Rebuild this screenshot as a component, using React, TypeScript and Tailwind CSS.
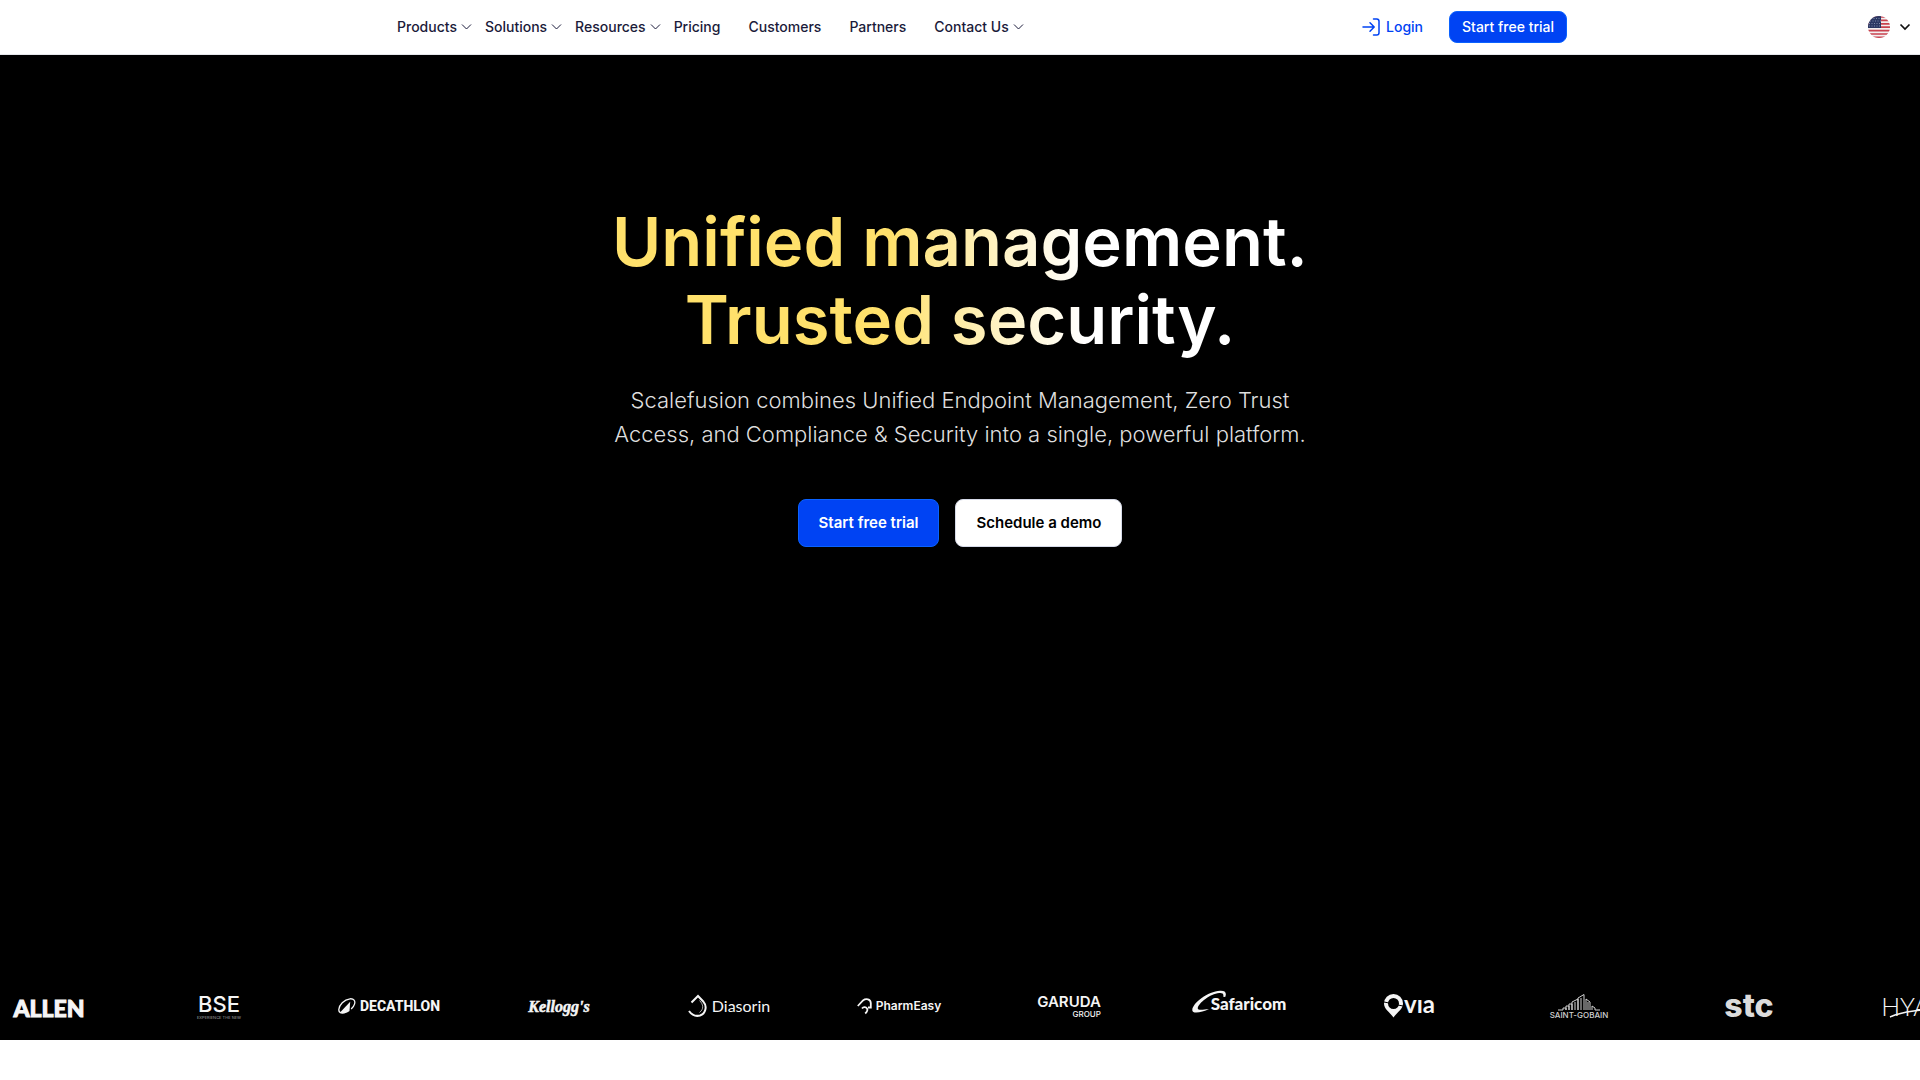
import type { ReactNode } from "react";

interface NavItem {
  label: string;
  hasMenu?: boolean;
}

interface Brand {
  name: string;
  logo: ReactNode;
}

const navItems: NavItem[] = [
  { label: "Products", hasMenu: true },
  { label: "Solutions", hasMenu: true },
  { label: "Resources", hasMenu: true },
  { label: "Pricing" },
  { label: "Customers" },
  { label: "Partners" },
  { label: "Contact Us", hasMenu: true },
];

const brands: Brand[] = [
  {
    name: "Allen",
    logo: (
      <svg width="84" height="28" viewBox="0 0 84 28" className="mt-2">
        <text x="42" y="21" textAnchor="middle" fill="currentColor" stroke="currentColor" strokeWidth="1" className="font-[Lato] text-[23px] font-black">
          ALLEN
        </text>
      </svg>
    ),
  },
  {
    name: "BSE",
    logo: (
      <span className="flex flex-col items-center pt-1">
        <span className="text-[22px] leading-5 font-medium">BSE</span>
        <span className="text-[4px] leading-2 text-white/60">EXPERIENCE THE NEW</span>
      </span>
    ),
  },
  {
    name: "Decathlon",
    logo: (
      <span className="flex items-center gap-1">
        <svg width="18" height="16" viewBox="0 0 18 16" fill="none">
          <path d="M7 14.5C3 16 .6 14.5.8 11.500 1.100 7 6 1.500 12 .8c4-.3 5.400 2 4.600 5-.5 2-1.800 3.700-3.400 5.200" stroke="currentColor" strokeWidth="1.300" />
          <path d="M2 14.500 12.200 3.800 11.500 13c-3 2.400-7 3-9.500 1.500Z" fill="currentColor" />
        </svg>
        <span className="font-[Roboto] text-[14px] leading-5 font-extrabold">DECATHLON</span>
      </span>
    ),
  },
  {
    name: "Kellogg's",
    logo: (
      <svg width="72" height="32" viewBox="0 0 72 32">
        <text x="36" y="22" textAnchor="middle" fill="currentColor" stroke="currentColor" strokeWidth=".5" className="font-['Liberation_Serif'] text-[16px] font-bold italic">
          Kellogg's
        </text>
      </svg>
    ),
  },
  {
    name: "Diasorin",
    logo: (
      <span className="flex items-center gap-1">
        <svg width="20" height="24" viewBox="0 0 20 24" fill="none" stroke="currentColor">
          <path d="M3.500 8.500 10 2l5.500 5.800c4 4.500 2 12-3.500 13.700C7.500 22.700 3.500 20.500 1 17" strokeWidth="2" />
          <path d="M11.500 6.500c4 4 4.500 8.500 0 12" strokeWidth="1" opacity=".7" />
        </svg>
        <span className="font-[Lato] text-[16px] leading-5">Diasorin</span>
      </span>
    ),
  },
  {
    name: "PharmEasy",
    logo: (
      <span className="flex items-center gap-1">
        <svg width="15" height="17" viewBox="0 0 15 17" fill="none" stroke="currentColor" strokeWidth="1.800">
          <path d="M.8 8 6 2.500C9 .2 13.500 1 13.800 5v4.500H11" />
          <path d="M5 10.500c1.500-2 4-1.500 5 0s.3 3-1.800 5" />
        </svg>
        <span className="text-[12px] leading-5 font-semibold">PharmEasy</span>
      </span>
    ),
  },
  {
    name: "Garuda Group",
    logo: (
      <span className="flex flex-col items-end">
        <span className="text-[15px] leading-4 font-semibold">GARUDA</span>
        <span className="text-[8px] leading-2 font-medium">GROUP</span>
      </span>
    ),
  },
  {
    name: "Safaricom",
    logo: (
      <span className="flex items-center -mt-2">
        <svg className="-mr-4" width="35" height="24" viewBox="0 0 35 24" fill="currentColor">
          <path d="M17 19C10 22.500 0 24.500.3 20 .6 13 16 1.500 28 .8c5-.3 7 1.700 5.200 6.200l-2-.2c.8-3-.8-4-4-3.700C18 4 7 13 5.800 17.800 5.200 20.500 10 20 17 19Z" />
        </svg>
        <span className="pt-1 font-[Lato] text-[17px] leading-6 font-black">Safaricom</span>
      </span>
    ),
  },
  {
    name: "Via",
    logo: (
      <span className="flex items-center">
        <svg width="21" height="24" viewBox="0 0 21 24" fill="none">
          <path d="M10.500 0a9.500 9.500 0 0 0-9.500 9.500C1 15 6.500 18 10.500 23.500 14.500 18 20 15 20 9.500A9.500 9.500 0 0 0 10.500 0Zm0 4a5.500 5.500 0 1 1 0 11 5.500 5.500 0 0 1 0-11Z" fill="currentColor" />
          <path d="m1 8 5 1M15 11l5 1" stroke="black" strokeWidth="1" />
        </svg>
        <span className="pb-1 font-[Lato] text-[24px] leading-6 font-bold">vıa</span>
      </span>
    ),
  },
  {
    name: "Saint-Gobain",
    logo: (
      <span className="flex flex-col items-center text-[#d0d0d0]">
        <svg width="44" height="17" viewBox="0 0 44 17" fill="none" stroke="currentColor">
          <path d="M1 16h5v-2h3v2-4h3v4-6h3v6-8l6-3v11M21 16V4l6-3.500V16M29 16V5l4 3v8M35 16v-4l3 2v2h5M18 16V8M24 16V4M31 16V8" />
        </svg>
        <span className="text-[8px] leading-2 font-medium">SAINT-GOBAIN</span>
      </span>
    ),
  },
  {
    name: "stc",
    logo: (
      <span className="text-[32px] leading-6 font-extrabold text-[#dcdcdc]">stc</span>
    ),
  },
  {
    name: "Hyatt",
    logo: (
      <span className="relative font-[Lato] text-[25px] leading-6 font-light">
        HYATT
        <svg className="absolute left-2 top-3" width="60" height="12" viewBox="0 0 60 12" fill="none">
          <path d="M1 11C12 6 34 2 58 5" stroke="currentColor" strokeWidth="1.500" />
        </svg>
      </span>
    ),
  },
];

function MenuChevron() {
  return (
    <svg width="11" height="6" viewBox="0 0 11 6" fill="none" stroke="currentColor" strokeWidth="1">
      <path d="m1 .5 4.500 4.500L10 .5" />
    </svg>
  );
}

function LoginIcon() {
  return (
    <svg width="18" height="18" viewBox="0 0 18 18" fill="none" stroke="currentColor" strokeWidth="1.500" strokeLinecap="round" strokeLinejoin="round">
      <path d="M1 9h11M8 4.800 12.200 9 8 13.200M11.500 1h3.200C16 1 17 2 17 3.300v11.400c0 1.300-1 2.300-2.300 2.300h-3.200" />
    </svg>
  );
}

function UsFlag() {
  return (
    <svg width="22" height="22" viewBox="0 0 22 22">
      <clipPath id="flag-circle">
        <circle cx="11" cy="11" r="11" />
      </clipPath>
      <g clipPath="url(#flag-circle)">
        <rect width="22" height="22" fill="#f3eff0" />
        <path d="M0 1h22M0 4.400h22M0 7.800h22M0 11.200h22M0 14.600h22M0 18h22M0 21.300h22" stroke="#c9414d" strokeWidth="1.700" />
        <rect width="13" height="12" fill="#2b3763" />
        <path d="M3 2.500h10M2 5h11M1 7.500h12M1 10h12" stroke="#7f88aa" strokeWidth="1" strokeDasharray="1 1.500" />
      </g>
    </svg>
  );
}

function Header() {
  return (
    <header className="grid grid-cols-[1fr_minmax(0,1214px)_1fr] items-center h-[55px] bg-white border-b border-gray-200">
      <div className="col-start-2 flex items-center justify-between pl-11">
        <nav className="flex items-center text-[14px] leading-5 font-medium text-[#1b1b3a]">
          {navItems.map((item) => (
            <a
              key={item.label}
              href="#"
              className={`flex items-center gap-1 ${item.hasMenu ? "pr-[13px]" : "pr-7"}`}
            >
              {item.label}
              {item.hasMenu && <MenuChevron />}
            </a>
          ))}
        </nav>

        <div className="flex items-center gap-[26px]">
          <a href="#" className="flex items-center gap-1.5 text-[14px] leading-5 font-medium text-[#0043f3]">
            <LoginIcon /> Login
          </a>
          <button className="h-8 px-3 rounded-lg border border-[#0a62ff] bg-[#0043f3] text-white text-[14px] leading-5 font-medium cursor-pointer">
            Start free trial
          </button>
        </div>
      </div>

      <button aria-label="Choose language" className="justify-self-end flex items-center gap-2 pr-2 cursor-pointer">
        <UsFlag />
        <svg width="14" height="8" viewBox="0 0 14 8" fill="none" stroke="#111" strokeWidth="1.700">
          <path d="m2.500 1.500 4.500 4.500 4.500-4.500" />
        </svg>
      </button>
    </header>
  );
}

export default function App() {
  return (
    <div className="font-[Inter,sans-serif] bg-white overflow-x-hidden">
      <Header />

      <main className="bg-black text-white">
        <section className="flex flex-col items-center pt-[148px] text-center">
          <h1 className="text-[67px] leading-[78px] font-semibold bg-linear-to-r from-[#ffe16b] from-40% to-white to-68% bg-clip-text text-transparent">
            Unified management.
            <br />
            Trusted security.
          </h1>
          <p className="mt-6 text-[22px] leading-[34px] font-light text-[#dedede]">
            Scalefusion combines Unified Endpoint Management, Zero Trust
            <br />
            Access, and Compliance &amp; Security into a single, powerful platform.
          </p>
          <div className="mt-12 flex gap-4">
            <button className="h-12 px-5 rounded-lg border border-[#0a62ff] bg-[#0043f3] text-[15px] leading-6 font-semibold cursor-pointer">
              Start free trial
            </button>
            <button className="h-12 px-5 rounded-lg border border-[#d6dae8] bg-white text-black text-[15px] leading-6 font-semibold cursor-pointer">
              Schedule a demo
            </button>
          </div>
        </section>

        <ul className="mt-[435px] -ml-9 pb-[10px] flex overflow-hidden">
          {brands.map((brand) => (
            <li key={brand.name} className="w-[170px] h-12 shrink-0 flex items-center justify-center text-[#f5f5f5]">
              {brand.logo}
            </li>
          ))}
        </ul>
      </main>
    </div>
  );
}
